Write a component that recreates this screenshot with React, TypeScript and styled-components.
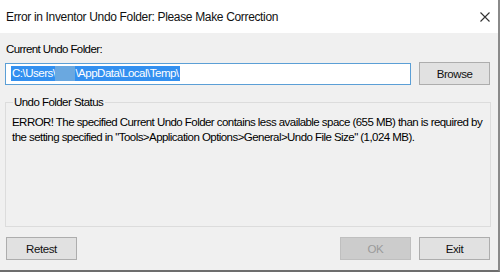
import styled, { createGlobalStyle } from 'styled-components';

const GlobalStyle = createGlobalStyle`
    html, body {
        margin: 0;
        padding: 0;
        background: #f0f0f0;
    }
    body {
        font-family: 'Liberation Sans', Arial, sans-serif;
        color: #000;
    }
`;

const Window = styled.div`
    width: 500px;
    height: 272px;
    box-sizing: border-box;
    display: flex;
    flex-direction: column;
    background: #f0f0f0;
    border-right: 2px solid #8a8a8a;
    border-bottom: 2px solid #6d6d6d;
    overflow: hidden;
`;

const TitleBar = styled.div`
    height: 33px;
    flex-shrink: 0;
    background: #ffffff;
    display: flex;
    align-items: center;
    justify-content: space-between;
    padding: 0 8px 0 6px;
`;

const Title = styled.span`
    font-size: 12px;
    letter-spacing: -0.34px;
    color: #111;
`;

const CloseIcon = styled.svg`
    width: 10px;
    height: 10px;
`;

const Body = styled.div`
    flex: 1;
    display: flex;
    flex-direction: column;
    padding: 9px 8px 0 5px;
`;

const Label = styled.div`
    font-size: 11.5px;
    letter-spacing: -0.6px;
    padding-left: 1px;
    height: 14px;
    line-height: 14px;
`;

const FolderRow = styled.div`
    margin-top: 6px;
    display: flex;
    align-items: center;
    gap: 8px;
`;

const PathBox = styled.div`
    width: 408px;
    height: 22px;
    box-sizing: border-box;
    border: 1px solid #5b9fd6;
    background: #ffffff;
    display: flex;
    align-items: center;
    padding-left: 5px;
`;

const Selected = styled.span`
    background: #3390f0;
    color: #ffffff;
    font-size: 11.5px;
    letter-spacing: -0.5px;
    line-height: 15px;
    padding: 0 1px;
`;

const Masked = styled.span`
    display: inline-block;
    width: 20px;
    height: 15px;
    vertical-align: top;
    background: #6aa8e0;
`;

const Button = styled.button<{ disabled?: boolean }>`
    width: 71px;
    height: 23px;
    box-sizing: border-box;
    border: 1px solid ${(p) => (p.disabled ? '#bfbfbf' : '#adadad')};
    background: ${(p) => (p.disabled ? '#cccccc' : '#e1e1e1')};
    color: ${(p) => (p.disabled ? '#9a9a9a' : '#111')};
    font-family: 'Liberation Sans', Arial, sans-serif;
    font-size: 11.5px;
    letter-spacing: -0.4px;
    padding: 0;
`;

const GroupBox = styled.fieldset`
    margin: 11px 0 0 0;
    width: 486px;
    height: 131px;
    box-sizing: border-box;
    border: 1px solid #dcdcdc;
    padding: 4px 5px 0 6px;
`;

const Legend = styled.legend`
    font-size: 11.5px;
    letter-spacing: -0.55px;
    padding: 0 2px 0 1px;
    margin-left: 1px;
`;

const Message = styled.p`
    margin: 3px 0 0 0;
    font-size: 11.5px;
    line-height: 15px;
    letter-spacing: -0.55px;
    white-space: nowrap;
`;

const ButtonRow = styled.div`
    margin-top: 10px;
    display: flex;
    align-items: center;
    padding-left: 1px;
    gap: 8px;
`;

const Spacer = styled.div`
    flex: 1;
`;

function App() {
    return (
        <>
            <GlobalStyle />
            <Window>
                <TitleBar>
                    <Title>Error in Inventor Undo Folder: Please Make Correction</Title>
                    <CloseIcon viewBox="0 0 10 10">
                        <path d="M0.5 0.5 L9.5 9.5 M9.5 0.5 L0.5 9.5" stroke="#333" strokeWidth="1.1" fill="none" />
                    </CloseIcon>
                </TitleBar>
                <Body>
                    <Label>Current Undo Folder:</Label>
                    <FolderRow>
                        <PathBox>
                            <Selected>
                                C:\Users\<Masked />\AppData\Local\Temp\
                            </Selected>
                        </PathBox>
                        <Button>Browse</Button>
                    </FolderRow>
                    <GroupBox>
                        <Legend>Undo Folder Status</Legend>
                        <Message>
                            ERROR! The specified Current Undo Folder contains less available space (655 MB) than is required by
                            <br />
                            the setting specified in "Tools&gt;Application Options&gt;General&gt;Undo File Size" (1,024 MB).
                        </Message>
                    </GroupBox>
                    <ButtonRow>
                        <Button>Retest</Button>
                        <Spacer />
                        <Button disabled>OK</Button>
                        <Button>Exit</Button>
                    </ButtonRow>
                </Body>
            </Window>
        </>
    );
}

export default App;
